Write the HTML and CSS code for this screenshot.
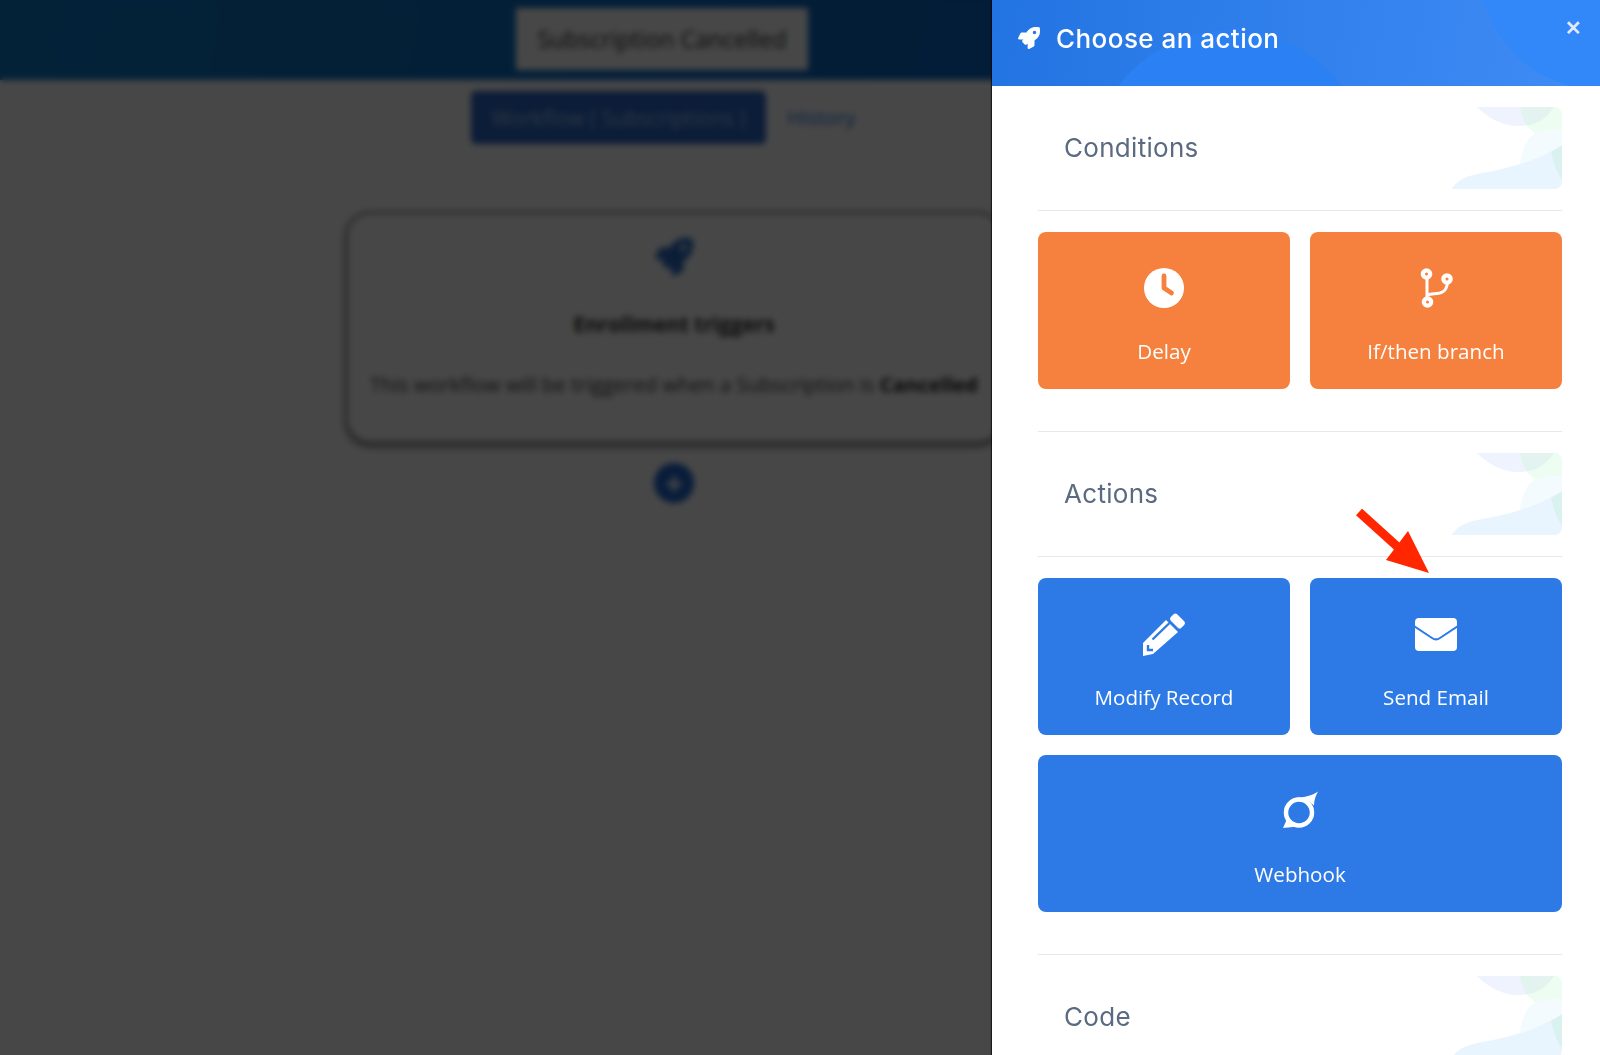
FILE: index.html
```html
<!DOCTYPE html>
<html lang="en">
<head>
<meta charset="utf-8">
<title>Choose an action</title>
<link rel="stylesheet" href="styles.css">
</head>
<body>
<div class="app">
  <header class="topbar"><button class="name-btn">Subscription Cancelled</button></header>
  <nav class="tabs">
    <span class="tab-active">Workflow ( Subscriptions )</span>
    <span class="tab-link">History</span>
  </nav>
  <section class="trigger-card">
    <svg class="trigger-icon" viewBox="0 0 512 512"><use href="#rocket"/></svg>
    <h3 class="trigger-title">Enrollment triggers</h3>
    <p class="trigger-text">This workflow will be triggered when a Subscription is <b>Cancelled</b></p>
  </section>
  <div class="add-step">+</div>
</div>
<div class="backdrop"></div>
<aside class="drawer">
  <header class="drawer-head">
    <svg class="head-icon" viewBox="0 0 512 512"><path id="rocket" fill="currentColor" d="M505.12 19.09c-1.19-5.53-6.66-11-12.21-12.18C460.72 0 435.51 0 410.41 0 307.18 0 245.27 55.2 199.05 128H94.84c-16.35.02-35.56 11.88-42.89 26.48L2.52 253.3A28.4 28.4 0 0 0 0 264a24 24 0 0 0 24.01 24h103.81l-22.48 22.47c-11.36 11.36-13 32.26 0 45.25l50.91 50.91c11.16 11.19 32.16 13.16 45.28 0l22.47-22.47V488a24 24 0 0 0 24.01 24 28.56 28.56 0 0 0 10.7-2.52l98.73-49.39c14.63-7.3 26.51-26.5 26.51-42.86V312.8c72.6-46.31 128.03-108.41 128.03-211.1.01-25.2.01-50.4-6.95-82.61ZM384.04 168a40 40 0 1 1 40.01-40 40.02 40.02 0 0 1-40.01 40Z"/></svg>
    <h2 class="drawer-title">Choose an action</h2>
    <span class="drawer-close">✕</span>
  </header>

  <section class="group">
    <div class="group-head">
      <h4 class="group-title">Conditions</h4>
      <svg class="group-art" viewBox="0 0 110 82"><use href="#art"/></svg>
    </div>
    <div class="tiles">
      <div class="tile tile-orange">
        <svg class="tile-icon" viewBox="0 0 44 44"><circle cx="22" cy="22" r="20" fill="#fff"/><path d="M22 10v12l7.500 5" fill="none" stroke="#f6803e" stroke-width="4.800" stroke-linecap="round" stroke-linejoin="round"/></svg>
        <span class="tile-label">Delay</span>
      </div>
      <div class="tile tile-orange">
        <svg class="tile-icon" viewBox="0 0 44 44"><path d="M13 8v28M13.500 29c7-3 19 2 20-13" fill="none" stroke="#fff" stroke-width="3"/><g fill="#fff"><circle cx="12.500" cy="8" r="5.800"/><circle cx="33" cy="13" r="5.800"/><circle cx="13.500" cy="36" r="5.800"/></g><g fill="#f6803e"><circle cx="12.500" cy="8" r="1.500"/><circle cx="33" cy="13" r="1.500"/><circle cx="13.500" cy="36" r="1.500"/></g></svg>
        <span class="tile-label">If/then branch</span>
      </div>
    </div>
  </section>

  <section class="group">
    <div class="group-head">
      <h4 class="group-title">Actions</h4>
      <svg class="group-art" viewBox="0 0 110 82"><defs><g id="art"><path fill="#eef3fd" d="M25 0C38 13 52 19 66 19 80 19 94 12 102 0Z"/><path fill="#edfdf1" d="M68 0H102C108 0 110 3 110 8V72C106 68 104 60 99 45 94 33 80 25 74 18Z"/><path fill="#e3f3ef" d="M68 0H102C94 12 82 19 74 18 71 12 69 6 68 0Z"/><path fill="#f3fbff" d="M68 57C70 40 76 28 87 25 95 23 103 23 110 23V38C96 47 82 52 68 57Z"/><path fill="#e9f5fe" d="M0 82C5 73 14 69 30 66 60 61 88 52 110 38V74C110 79 107 82 102 82Z"/><path fill="#daf2ef" d="M99 45C102 43 106 41 110 38V72C106 68 102 58 99 45Z"/></g></defs><use href="#art"/></svg>
    </div>
    <div class="tiles">
      <div class="tile tile-blue">
        <svg class="tile-icon" viewBox="0 0 44 44"><path fill="#fff" d="M24 8 36 20 11 42 1 44V31Z"/><rect x="31" y="1.500" width="9" height="15" rx="2.500" transform="rotate(-45 35.500 9)" fill="#fff"/><path d="M10.500 27.500 27.500 11M6 33v5h5" fill="none" stroke="#2d7ae6" stroke-width="2.400"/></svg>
        <span class="tile-label">Modify Record</span>
      </div>
      <div class="tile tile-blue">
        <svg class="tile-icon" viewBox="0 0 44 44"><rect x="1" y="6" width="42" height="33" rx="4" fill="#fff"/><path d="M0 14 18 26c2.500 1.700 5.500 1.700 8 0L44 14" fill="none" stroke="#2d7ae6" stroke-width="2"/></svg>
        <span class="tile-label">Send Email</span>
      </div>
      <div class="tile tile-blue tile-wide">
        <svg class="tile-icon" viewBox="0 0 44 44"><circle cx="21" cy="23.500" r="13" fill="none" stroke="#fff" stroke-width="4.500"/><path fill="#fff" d="M19 8.500c7 0 15-2 21-6-2 4-4 8-4 14l-5-4-10-1Z"/><path fill="#fff" d="M9 30 5 39c7-1 13-1 19-2l-7-3Z"/></svg>
        <span class="tile-label">Webhook</span>
      </div>
    </div>
  </section>

  <section class="group">
    <div class="group-head">
      <h4 class="group-title">Code</h4>
      <svg class="group-art" viewBox="0 0 110 82"><use href="#art"/></svg>
    </div>
  </section>

  <svg class="pointer" viewBox="0 0 80 70"><path d="M7 3 48 40" stroke="#ff2600" stroke-width="9" fill="none"/><path fill="#ff2600" d="M56 22 77 64 34 51Z"/></svg>
</aside>
</body>
</html>
```

FILE: styles.css
```css
* { box-sizing: border-box; }
html, body { margin: 0; height: 100%; overflow: hidden; }
body { position: relative; background: #fff; font-family: "Open Sans", sans-serif; }

.app { display: flex; flex-direction: column; align-items: flex-start; width: 1600px; height: 1055px; }
.topbar { display: flex; justify-content: center; align-items: flex-start; align-self: stretch; width: 1324px; flex: none; height: 80px; padding-top: 8px; }
.app::before { content: ""; position: absolute; left: 0; top: 0; width: 1600px; height: 80px; background: linear-gradient(100deg, #0d7ac8, #0a5ac4); z-index: -1; }
.name-btn { width: 292px; height: 62px; border: 0; background: #fff; color: #333; font: 500 23.500px "Open Sans", sans-serif; white-space: nowrap; }
.tabs { display: flex; align-items: center; gap: 21px; margin: 11px 0 0 471px; }
.tab-active { display: flex; align-items: center; justify-content: center; width: 295px; height: 53px; border-radius: 5px; background: #2a68c8; color: #a9c8f5; font-size: 21px; white-space: nowrap; }
.tab-link { color: #2d7ae6; font-size: 20.500px; line-height: 26px; margin-bottom: 2px; }
.trigger-card { flex: none; width: 658px; height: 233px; margin: 67px 0 0 345px; border: 3px solid #999; border-radius: 25px; box-shadow: 0 3px 5px rgba(0,0,0,.5); background: #fff; display: flex; flex-direction: column; align-items: center; padding-top: 24px; }
.trigger-icon { width: 38px; height: 38px; color: #2b6bc5; flex: none; }
.trigger-title { margin: 34px 0 0; font-size: 20.800px; font-weight: 700; color: #333; line-height: 28px; }
.trigger-text { margin: 32px 0 0; font-size: 20.300px; color: #444; line-height: 28px; white-space: nowrap; }
.trigger-text b { color: #222; }
.add-step { flex: none; display: flex; align-items: center; justify-content: center; width: 40px; height: 40px; margin: 19px 0 0 654px; border-radius: 50%; background: #1f66d0; color: #fff; font-size: 32px; font-weight: 700; }

.backdrop { position: absolute; inset: 0; background: rgba(0,0,0,.72); backdrop-filter: blur(3px); }

.drawer { position: absolute; top: 0; right: 0; bottom: 0; width: 608px; background: #fff; box-shadow: -1px 0 1px rgba(0,0,0,.6); overflow: hidden; }
.drawer-head { display: flex; align-items: center; height: 86px; padding: 0 18px 10px 26px; color: #fff;
  background:
    radial-gradient(circle 120px at 608px -30px, #3288f8 99.500%, transparent 100%),
    radial-gradient(circle 140px at 238px 170px, #2b80f3 99.500%, transparent 100%),
    linear-gradient(100deg, #2274e2, #408cf6); }
.head-icon { width: 22px; height: 22px; flex: none; margin-right: 16px; }
.drawer-title { margin: 0; font: 500 26px "Inter", sans-serif; letter-spacing: .45px; }
.drawer-close { margin: -22px 0 0 auto; font-size: 20px; font-weight: 700; color: #dfe9fb; }

.group { margin: 0 38px 0 46px; padding: 21px 0 42px; border-bottom: 1px solid #e6e8eb; }
.group:last-of-type { border-bottom: 0; padding-bottom: 0; }
.group-head { position: relative; display: flex; align-items: center; height: 82px; padding: 0 0 2px 26px; margin-bottom: 21px; }
.group-title { margin: 0; font: 400 26px "Inter", sans-serif; letter-spacing: .3px; color: #5a6a80; }
.group-art { position: absolute; top: 0; right: 0; width: 110px; height: 82px; }
.tiles { display: grid; grid-template-columns: 1fr 1fr; gap: 20px; padding-top: 21px; border-top: 1px solid #e6e8eb; }
.tile { display: flex; flex-direction: column; align-items: center; height: 157px; padding-top: 34px; border-radius: 8px; color: #fff; }
.tile-orange { background: #f6803e; }
.tile-blue { background: #2d7ae6; }
.tile-wide { grid-column: 1 / -1; }
.tile-icon { width: 44px; height: 44px; flex: none; }
.tile-label { margin-top: 28px; font-size: 20.600px; line-height: 27px; }

.pointer { position: absolute; left: 360px; top: 509px; width: 80px; height: 70px; }
```
